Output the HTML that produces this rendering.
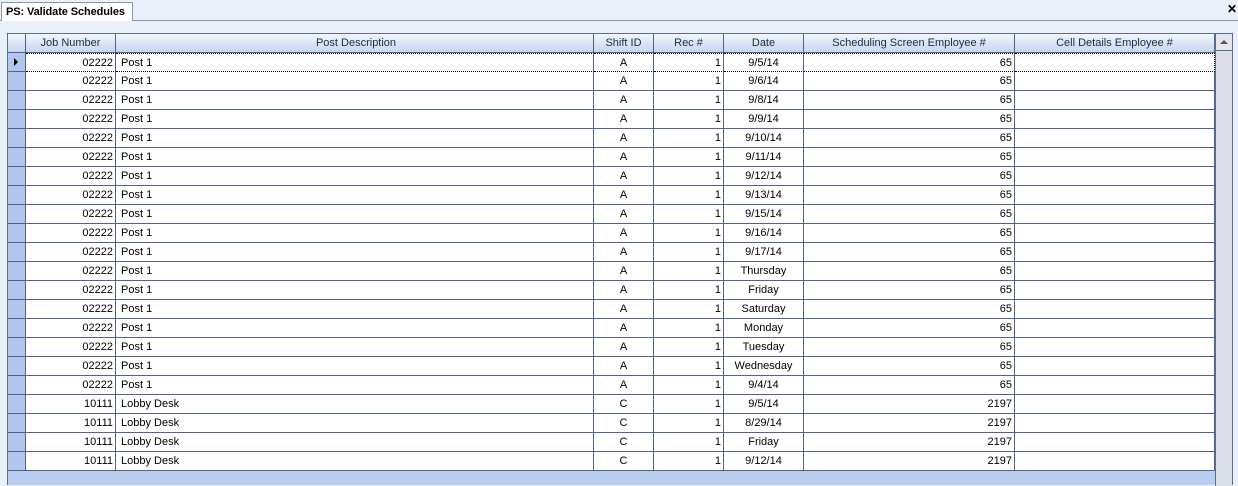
<!DOCTYPE html>
<html><head><meta charset="utf-8"><style>
*{box-sizing:border-box;margin:0;padding:0}
body{width:1238px;height:485px;background:#e9f0fa;font-family:"Liberation Sans",sans-serif;font-size:11px;position:relative;overflow:hidden;color:#000}
.tab{position:absolute;left:1px;top:2px;width:132px;height:19px;background:#fff;border:1px solid #8d97a5;border-bottom:none;font-weight:bold;font-size:11px;padding:3px 0 0 4px;z-index:2;white-space:nowrap;letter-spacing:-0.1px}
.tabline{position:absolute;left:0;top:20px;width:1238px;height:1px;background:#8d97a5}
.x{position:absolute;right:1px;top:2px;font-weight:bold;font-size:12px}
.grid{position:absolute;left:7px;top:33px;width:1226px;height:452px;background:#b8cdf0;border-left:1px solid #5a6e8c;border-right:1px solid #5a6e8c;border-top:1px solid #5a6e8c}
.row{display:flex;height:19px}
.c{height:19px;border-right:1px solid #4f6487;border-bottom:1px solid #4f6487;background:#fff;line-height:18px;padding:0 2px;white-space:nowrap;overflow:hidden}
.h .c{background:linear-gradient(#f3f6fc,#c6d5f0);border-bottom:1px solid #4f6487;text-align:center;color:#1b2a44;height:19px}
.h{height:19px}
.rh{width:18px;background:#b3c7ee!important;padding:0}
.r{text-align:right}.m{text-align:center}
.w1{width:90px}.w2{width:478px;padding-left:5px}.w3{width:60px}.w4{width:70px}.w5{width:80px}.w6{width:211px}.w7{width:200px}
.h .rh{background:linear-gradient(#f3f6fc,#c6d5f0)!important}
.sb{position:absolute;left:1207px;top:0;width:17px;height:452px;background:#dcdde6;border-left:1px solid #5a6e8c}
.up{height:17px;border-bottom:1px solid #5a6e8c;background:#e4e6ee;position:relative}
.up:after{content:"";position:absolute;left:4px;top:6px;border-left:4px solid transparent;border-right:4px solid transparent;border-bottom:4px solid #555}
.sel .c:not(.rh){border-top:1px dotted #000;border-bottom:1px dotted #000}
.sel .w7{border-right:1px dotted #000}
.arrow{display:block;margin:5px 0 0 6px;width:0;height:0;border-top:4px solid transparent;border-bottom:4px solid transparent;border-left:4px solid #000}
</style></head><body>
<div class="tab">PS: Validate Schedules</div><div class="tabline"></div><div class="x">✕</div>
<div class="grid">
<div class="row h"><div class="c rh"></div><div class="c w1">Job Number</div><div class="c w2">Post Description</div><div class="c w3">Shift ID</div><div class="c w4">Rec #</div><div class="c w5">Date</div><div class="c w6">Scheduling Screen Employee #</div><div class="c w7">Cell Details Employee #</div></div>
<div class="row sel"><div class="c rh"><span class="arrow"></span></div><div class="c w1 r">02222</div><div class="c w2">Post 1</div><div class="c w3 m">A</div><div class="c w4 r">1</div><div class="c w5 m">9/5/14</div><div class="c w6 r">65</div><div class="c w7"></div></div>
<div class="row"><div class="c rh"></div><div class="c w1 r">02222</div><div class="c w2">Post 1</div><div class="c w3 m">A</div><div class="c w4 r">1</div><div class="c w5 m">9/6/14</div><div class="c w6 r">65</div><div class="c w7"></div></div>
<div class="row"><div class="c rh"></div><div class="c w1 r">02222</div><div class="c w2">Post 1</div><div class="c w3 m">A</div><div class="c w4 r">1</div><div class="c w5 m">9/8/14</div><div class="c w6 r">65</div><div class="c w7"></div></div>
<div class="row"><div class="c rh"></div><div class="c w1 r">02222</div><div class="c w2">Post 1</div><div class="c w3 m">A</div><div class="c w4 r">1</div><div class="c w5 m">9/9/14</div><div class="c w6 r">65</div><div class="c w7"></div></div>
<div class="row"><div class="c rh"></div><div class="c w1 r">02222</div><div class="c w2">Post 1</div><div class="c w3 m">A</div><div class="c w4 r">1</div><div class="c w5 m">9/10/14</div><div class="c w6 r">65</div><div class="c w7"></div></div>
<div class="row"><div class="c rh"></div><div class="c w1 r">02222</div><div class="c w2">Post 1</div><div class="c w3 m">A</div><div class="c w4 r">1</div><div class="c w5 m">9/11/14</div><div class="c w6 r">65</div><div class="c w7"></div></div>
<div class="row"><div class="c rh"></div><div class="c w1 r">02222</div><div class="c w2">Post 1</div><div class="c w3 m">A</div><div class="c w4 r">1</div><div class="c w5 m">9/12/14</div><div class="c w6 r">65</div><div class="c w7"></div></div>
<div class="row"><div class="c rh"></div><div class="c w1 r">02222</div><div class="c w2">Post 1</div><div class="c w3 m">A</div><div class="c w4 r">1</div><div class="c w5 m">9/13/14</div><div class="c w6 r">65</div><div class="c w7"></div></div>
<div class="row"><div class="c rh"></div><div class="c w1 r">02222</div><div class="c w2">Post 1</div><div class="c w3 m">A</div><div class="c w4 r">1</div><div class="c w5 m">9/15/14</div><div class="c w6 r">65</div><div class="c w7"></div></div>
<div class="row"><div class="c rh"></div><div class="c w1 r">02222</div><div class="c w2">Post 1</div><div class="c w3 m">A</div><div class="c w4 r">1</div><div class="c w5 m">9/16/14</div><div class="c w6 r">65</div><div class="c w7"></div></div>
<div class="row"><div class="c rh"></div><div class="c w1 r">02222</div><div class="c w2">Post 1</div><div class="c w3 m">A</div><div class="c w4 r">1</div><div class="c w5 m">9/17/14</div><div class="c w6 r">65</div><div class="c w7"></div></div>
<div class="row"><div class="c rh"></div><div class="c w1 r">02222</div><div class="c w2">Post 1</div><div class="c w3 m">A</div><div class="c w4 r">1</div><div class="c w5 m">Thursday</div><div class="c w6 r">65</div><div class="c w7"></div></div>
<div class="row"><div class="c rh"></div><div class="c w1 r">02222</div><div class="c w2">Post 1</div><div class="c w3 m">A</div><div class="c w4 r">1</div><div class="c w5 m">Friday</div><div class="c w6 r">65</div><div class="c w7"></div></div>
<div class="row"><div class="c rh"></div><div class="c w1 r">02222</div><div class="c w2">Post 1</div><div class="c w3 m">A</div><div class="c w4 r">1</div><div class="c w5 m">Saturday</div><div class="c w6 r">65</div><div class="c w7"></div></div>
<div class="row"><div class="c rh"></div><div class="c w1 r">02222</div><div class="c w2">Post 1</div><div class="c w3 m">A</div><div class="c w4 r">1</div><div class="c w5 m">Monday</div><div class="c w6 r">65</div><div class="c w7"></div></div>
<div class="row"><div class="c rh"></div><div class="c w1 r">02222</div><div class="c w2">Post 1</div><div class="c w3 m">A</div><div class="c w4 r">1</div><div class="c w5 m">Tuesday</div><div class="c w6 r">65</div><div class="c w7"></div></div>
<div class="row"><div class="c rh"></div><div class="c w1 r">02222</div><div class="c w2">Post 1</div><div class="c w3 m">A</div><div class="c w4 r">1</div><div class="c w5 m">Wednesday</div><div class="c w6 r">65</div><div class="c w7"></div></div>
<div class="row"><div class="c rh"></div><div class="c w1 r">02222</div><div class="c w2">Post 1</div><div class="c w3 m">A</div><div class="c w4 r">1</div><div class="c w5 m">9/4/14</div><div class="c w6 r">65</div><div class="c w7"></div></div>
<div class="row"><div class="c rh"></div><div class="c w1 r">10111</div><div class="c w2">Lobby Desk</div><div class="c w3 m">C</div><div class="c w4 r">1</div><div class="c w5 m">9/5/14</div><div class="c w6 r">2197</div><div class="c w7"></div></div>
<div class="row"><div class="c rh"></div><div class="c w1 r">10111</div><div class="c w2">Lobby Desk</div><div class="c w3 m">C</div><div class="c w4 r">1</div><div class="c w5 m">8/29/14</div><div class="c w6 r">2197</div><div class="c w7"></div></div>
<div class="row"><div class="c rh"></div><div class="c w1 r">10111</div><div class="c w2">Lobby Desk</div><div class="c w3 m">C</div><div class="c w4 r">1</div><div class="c w5 m">Friday</div><div class="c w6 r">2197</div><div class="c w7"></div></div>
<div class="row"><div class="c rh"></div><div class="c w1 r">10111</div><div class="c w2">Lobby Desk</div><div class="c w3 m">C</div><div class="c w4 r">1</div><div class="c w5 m">9/12/14</div><div class="c w6 r">2197</div><div class="c w7"></div></div>
<div class="sb"><div class="up"></div></div>
</div>
</body></html>
